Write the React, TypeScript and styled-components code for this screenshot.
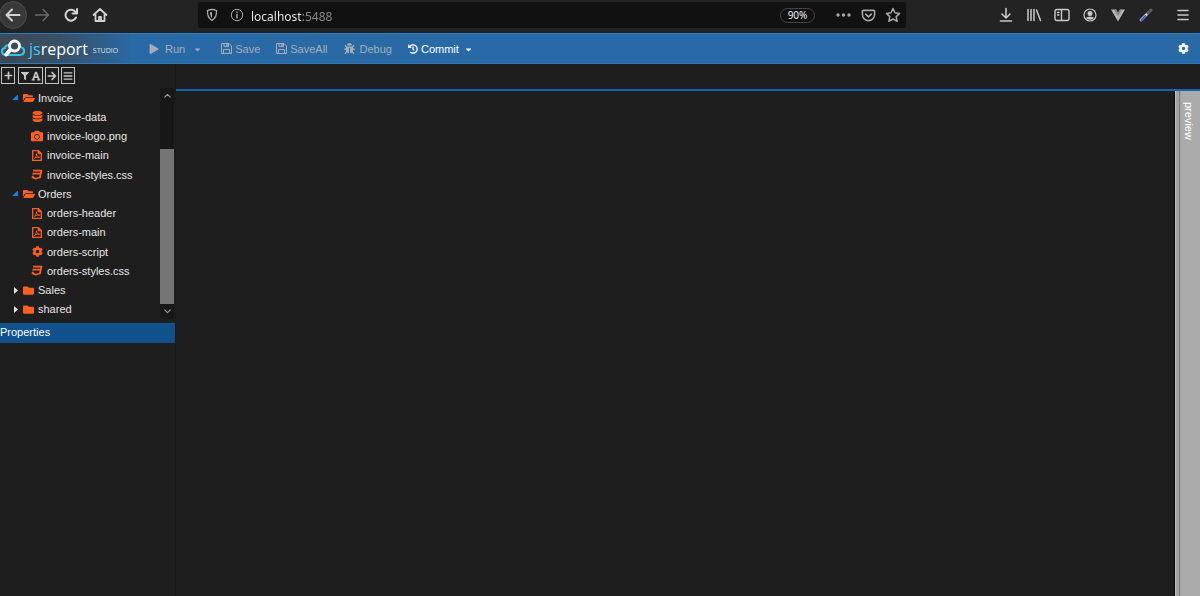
import React from "react";
import styled, { createGlobalStyle } from "styled-components";
import {
  FaArrowRight, FaBars, FaBug, FaCamera, FaCaretDown, FaCog, FaDatabase, FaFilter,
  FaFolder, FaFolderOpen, FaFont, FaHistory, FaPlay, FaPlus,
} from "react-icons/fa";

const sans = `"Liberation Sans", Arial, sans-serif`;
const humanist = `"Noto Sans", "Open Sans", sans-serif`;

const GlobalStyle = createGlobalStyle`
  * { box-sizing: border-box; }
  html, body, #root { height: 100%; }
  body { margin: 0; background: #1e1e1e; color: #e6e6e6; font: 11px/16px ${sans}; overflow: hidden; }
  button { border: 0; padding: 0; margin: 0; background: none; color: inherit; font: inherit; cursor: pointer; }
  svg { display: block; flex: none; }
  ul { list-style: none; margin: 0; padding: 0; }
`;

const Page = styled.div`
  display: flex;
  flex-direction: column;
  height: 100%;
`;

const BrowserBar = styled.header`
  display: flex;
  align-items: flex-start;
  height: 33px;
  background: #232323;
`;

const NavButtons = styled.nav`
  display: flex;
  align-items: center;
  width: 198px;
  height: 30px;
`;

const NavButton = styled.button<{ $back?: boolean; $dim?: boolean }>`
  display: grid;
  place-items: center;
  width: ${(p) => (p.$back ? 28 : 29)}px;
  height: 28px;
  margin-left: ${(p) => (p.$back ? "-1px" : "0")};
  border: ${(p) => (p.$back ? "1px solid #4c4c4c" : "0")};
  border-radius: 50%;
  background: ${(p) => (p.$back ? "#393939" : "transparent")};
  color: ${(p) => (p.$dim ? "#6a6a6a" : "#d2d2d2")};
`;

const AddressBar = styled.div`
  display: flex;
  align-items: center;
  flex: 0 1 708px;
  gap: 9px;
  height: 26px;
  margin-top: 2px;
  padding: 0 5px 0 6px;
  border-radius: 2px;
  background: #111;
  color: #a8a8a8;
`;

const Address = styled.input`
  flex: 1;
  min-width: 0;
  height: 22px;
  margin-left: -3px;
  padding: 2px 0 0;
  border: 0;
  outline: 0;
  background: linear-gradient(90deg, #f2f2f2 51px, #8c8c8c 51px);
  background-clip: text;
  -webkit-text-fill-color: transparent;
  font: 12px/20px ${humanist};
`;

const ZoomLevel = styled.button`
  width: 35px;
  height: 15px;
  margin-right: 11px;
  border: 1px solid #454545;
  border-radius: 8px;
  color: #eee;
  font: 10px/13px ${humanist};
`;

const Extensions = styled.div`
  display: flex;
  align-items: center;
  height: 30px;
  margin-left: auto;
  padding-right: 9px;
  gap: 12px;
  color: #c9c9c9;
`;

const IconButton = styled.button<{ $spaced?: boolean }>`
  display: grid;
  place-items: center;
  width: 16px;
  height: 20px;
  margin-left: ${(p) => (p.$spaced ? "9px" : "0")};
`;

const Toolbar = styled.div`
  display: flex;
  align-items: center;
  height: 31px;
  border-top: 1px solid #2f7dc4;
  border-bottom: 1px solid #2f78b9;
  background: linear-gradient(90deg, #3d4954 0, #385066 60px, #296aa6 135px);
`;

const Brand = styled.a`
  display: flex;
  align-items: center;
  width: 149px;
  color: #fff;
  text-decoration: none;
`;

const BrandName = styled.span`
  margin-left: 4px;
  font: 16px/24px "Open Sans", sans-serif;
`;

const BrandPrefix = styled.span`
  color: #3fc6f5;
`;

const BrandTag = styled.span`
  margin: 5px 0 0 5px;
  font: 7px/10px "Open Sans", sans-serif;
  color: #dfe6ec;
`;

const Tool = styled.button<{ $active?: boolean; $gap?: number; $after?: number }>`
  display: flex;
  align-items: center;
  gap: ${(p) => p.$gap ?? 3}px;
  height: 28px;
  margin-right: ${(p) => p.$after ?? 16}px;
  color: ${(p) => (p.$active ? "#fff" : "#a6adb4")};
`;

const Caret = styled(FaCaretDown)`
  width: 9px;
  height: 9px;
  margin: 2px 0 0 2px;
`;

const Settings = styled.button`
  margin: 0 11px 0 auto;
  color: #fff;
`;

const Workspace = styled.div`
  display: flex;
  flex: 1;
  min-height: 0;
`;

const Sidebar = styled.aside`
  width: 176px;
  flex: none;
  border-right: 1px solid #1a1a1a;
`;

const TreeActions = styled.div`
  display: flex;
  align-items: center;
  gap: 2px;
  height: 24px;
  padding: 0 0 1px 1px;
  color: #c8c8c8;
`;

const TreeAction = styled.button<{ $wide?: boolean }>`
  display: flex;
  align-items: center;
  justify-content: center;
  gap: 2px;
  width: ${(p) => (p.$wide ? 25 : 14)}px;
  height: 17px;
  margin-left: ${(p) => (p.$wide ? 1 : 0)}px;
  border: 1px solid #c4c4c4;
`;

const TreePane = styled.div`
  display: flex;
  height: 231px;
`;

const Tree = styled.ul`
  display: grid;
  grid-auto-rows: 1fr;
  flex: 1;
`;

const TreeRow = styled.button<{ $nested?: boolean }>`
  display: flex;
  align-items: center;
  width: 100%;
  height: 100%;
  padding-left: ${(p) => (p.$nested ? 31 : 12)}px;
  text-align: left;
`;

const TreeIcon = styled.span<{ $nested?: boolean }>`
  display: grid;
  place-items: center;
  width: ${(p) => (p.$nested ? 12 : 11)}px;
  margin-right: 4px;
  color: #ff5f1f;
`;

const Twisty = styled.span`
  width: 7px;
  margin-right: 4px;
`;

const Scrollbar = styled.div`
  display: flex;
  flex-direction: column;
  align-items: center;
  width: 14px;
  margin-right: 1px;
  background: #171717;
`;

const ScrollArrow = styled.button`
  display: grid;
  place-items: center;
  width: 14px;
  height: 15px;
  color: #999;
`;

const Track = styled.div`
  display: flex;
  flex: 1;
  width: 14px;
  align-items: flex-end;
`;

const Thumb = styled.div`
  width: 100%;
  height: 77%;
  background: #757575;
`;

const PropertiesTitle = styled.h2`
  height: 20px;
  margin: 4px 0 0;
  background: #10508b;
  color: #fff;
  font: 11px/19px ${sans};
`;

const Main = styled.main`
  display: flex;
  flex-direction: column;
  flex: 1;
  min-width: 0;
`;

const TabStrip = styled.div`
  height: 27px;
  border-bottom: 2px solid #1462b4;
`;

const Content = styled.div`
  display: flex;
  flex: 1;
`;

const Editor = styled.section`
  flex: 1;
  border-right: 1px solid #050505;
`;

const Splitter = styled.div`
  width: 6px;
  border-left: 1px solid #c2c2c2;
  background: linear-gradient(90deg, #a4a4a4 3px, #808080 3px, #808080 4px, #a0a0a0 4px);
`;

const PreviewTab = styled.button`
  display: flex;
  align-items: flex-start;
  width: 19px;
  padding: 11px 4px 0 0;
  background: #ababab;
  color: #fff;
  writing-mode: vertical-rl;
  line-height: 15px;
`;

const Line = ({ d, size = 16, width = 2 }: { d: string; size?: number; width?: number }) => (
  <svg width={size} height={size} viewBox="0 0 16 16" fill="none" stroke="currentColor" strokeWidth={width} strokeLinecap="round" strokeLinejoin="round">
    <path d={d} />
  </svg>
);

const LogoMark = () => (
  <svg width="25" height="20" viewBox="0 0 25 20" fill="none">
    <path d="M8 6.500C6.500 6.300 5 7.400 4.800 9 3 9.300 2 10.700 2 12.300 2 14.500 3.700 16 6 16h13.500c2.600 0 4.500-1.600 4.500-4 0-2.300-1.700-3.800-4-4" stroke="#35c0ef" strokeWidth="2.200" />
    <path d="M10.500 10.500l-4.300 5" stroke="#fff" strokeWidth="4" strokeLinecap="round" />
    <circle cx="14.500" cy="7" r="5" fill="#3b4c5c" stroke="#fff" strokeWidth="2.800" />
  </svg>
);

const Floppy = () => (
  <svg width="11" height="11" viewBox="0 0 11 11" fill="none" stroke="currentColor">
    <path d="M.5.500h7.500L10.500 3v7.500H.5z" />
    <path d="M3 .500v3h4.500v-3M2.500 10.500V6.500h6v4" />
    <path d="M6 1v2" strokeWidth="1.500" />
  </svg>
);

type Kind = "data" | "image" | "pdf" | "script" | "css" | "open" | "closed";

const icons: Record<Kind, React.ReactNode> = {
  data: <FaDatabase size={11} />,
  image: <FaCamera size={12} />,
  pdf: (
    <svg width="10" height="11" viewBox="0 0 10 11" fill="none" stroke="currentColor">
      <path d="M.7.700h5.800L9.300 3.500v6.800H.7zM6.300.700v3h3" strokeWidth="1.300" />
      <path d="M2.200 8.700C3.500 8 4.700 5.500 4.300 3.700c.2 2 1.300 3.200 3.500 3.500-2-.2-3.500 0-4.800.7" strokeWidth=".9" />
    </svg>
  ),
  script: <FaCog size={11} />,
  css: (
    <svg width="12" height="11" viewBox="0 0 1792 1792" fill="currentColor">
      <path d="M275 128h1505l-266 1333-804 267-698-267 71-356h297l-29 147 422 161 486-161 68-339H119l58-297h1209l38-191H216z" />
    </svg>
  ),
  open: <FaFolderOpen size={12} />,
  closed: <FaFolder size={11} />,
};

const entries: { name: string; kind: Kind }[] = [
  { name: "Invoice", kind: "open" },
  { name: "invoice-data", kind: "data" },
  { name: "invoice-logo.png", kind: "image" },
  { name: "invoice-main", kind: "pdf" },
  { name: "invoice-styles.css", kind: "css" },
  { name: "Orders", kind: "open" },
  { name: "orders-header", kind: "pdf" },
  { name: "orders-main", kind: "pdf" },
  { name: "orders-script", kind: "script" },
  { name: "orders-styles.css", kind: "css" },
  { name: "Sales", kind: "closed" },
  { name: "shared", kind: "closed" },
];

function Entry({ name, kind }: { name: string; kind: Kind }) {
  const folder = kind === "open" || kind === "closed";
  return (
    <li>
      <TreeRow $nested={!folder}>
        {folder && (
          <Twisty>
            <svg width="7" height="7" viewBox="0 0 7 7">
              {kind === "open" ? <path d="M6 .500V6H0z" fill="#1683e8" /> : <path d="M2 0l4 3.500L2 7z" fill="#e8e0cc" />}
            </svg>
          </Twisty>
        )}
        <TreeIcon $nested={!folder}>{icons[kind]}</TreeIcon>
        {name}
      </TreeRow>
    </li>
  );
}

export default function App() {
  return (
    <Page>
      <GlobalStyle />
      <BrowserBar>
        <NavButtons>
          <NavButton $back aria-label="Back"><Line d="M14.500 8H1.500M7 2.500L1.500 8 7 13.500" /></NavButton>
          <NavButton $dim aria-label="Forward"><Line d="M1.500 8h13M9 2.500L14.500 8 9 13.500" width={1.5} /></NavButton>
          <NavButton aria-label="Reload"><Line d="M13 10.500A5.500 5.500 0 1 1 12.500 5M14 2v4.500H9.500" /></NavButton>
          <NavButton aria-label="Home"><Line d="M1.500 8L8 2l6.500 6M3.500 7.500V14h9V7.500M7 14v-4h2v4" width={1.8} /></NavButton>
        </NavButtons>
        <AddressBar>
          <IconButton aria-label="Tracking protection">
            <svg width="14" height="14" viewBox="0 0 14 14" fill="none" stroke="currentColor">
              <path d="M7 1.500c-2 0-3.500.5-4.500 1C2.300 7 3.500 10.500 7 12.500c3.500-2 4.700-5.500 4.500-10-1-.5-2.500-1-4.500-1z" strokeWidth="1.300" />
              <path d="M7 4v6C5.500 8.700 5 7 5 4.300z" fill="currentColor" stroke="none" />
            </svg>
          </IconButton>
          <IconButton aria-label="Site information">
            <svg width="14" height="14" viewBox="0 0 14 14" fill="none" stroke="currentColor">
              <circle cx="7" cy="7" r="5.700" />
              <path d="M7 6v4.500M7 3.500v1.500" strokeWidth="1.500" />
            </svg>
          </IconButton>
          <Address aria-label="Address" defaultValue="localhost:5488" />
          <ZoomLevel>90%</ZoomLevel>
          <IconButton aria-label="Page actions">
            <svg width="15" height="4" viewBox="0 0 15 4" fill="currentColor"><circle cx="2" cy="2" r="1.700" /><circle cx="7.500" cy="2" r="1.700" /><circle cx="13" cy="2" r="1.700" /></svg>
          </IconButton>
          <IconButton aria-label="Pocket"><Line d="M2.500 2.500h11q1 0 1 1V7a6.500 6.500 0 0 1-13 0V3.500q0-1 1-1zM5 6.500l3 3 3-3" size={15} width={1.7} /></IconButton>
          <IconButton aria-label="Bookmark"><Line d="M8 1.500l2 4.300 4.600.6-3.400 3.200.9 4.700L8 12l-4.100 2.300.9-4.700L1.400 6.400 6 5.800z" width={1.5} /></IconButton>
        </AddressBar>
        <Extensions>
          <IconButton aria-label="Downloads"><Line d="M8 1.500v9M4 7l4 4 4-4M2.500 14h11" width={1.6} /></IconButton>
          <IconButton aria-label="Library"><Line d="M2 2.500v11M5 2.500v11M8 2.500v11M10.500 3l4 10.500" width={1.5} /></IconButton>
          <IconButton aria-label="Sidebars"><Line d="M3 2.500h10q2 0 2 2v7q0 2-2 2H3q-2 0-2-2v-7q0-2 2-2zM7.500 3v10M3.500 5.500H5M3.500 8H5" width={1.4} /></IconButton>
          <IconButton aria-label="Account">
            <svg width="14" height="14" viewBox="0 0 14 14" fill="none"><circle cx="7" cy="7" r="6" stroke="currentColor" strokeWidth="1.200" /><circle cx="7" cy="5.500" r="2.500" fill="currentColor" /><path d="M3 10c1-1.800 7-1.800 8 0-2 2.300-6 2.300-8 0z" fill="currentColor" /></svg>
          </IconButton>
          <IconButton aria-label="Vue devtools">
            <svg width="14" height="13" viewBox="0 0 14 13"><path d="M0 .500h5l2 3.500L9 .500h5L7 12.500z" fill="#b4b4b4" /><path d="M3 .500h2l2 3.500L9 .500h2L7 7.500z" fill="#888" /></svg>
          </IconButton>
          <IconButton aria-label="Color picker">
            <svg width="14" height="14" viewBox="0 0 14 14" fill="none" strokeLinecap="round"><path d="M2 12l6-6" stroke="#d5d5e2" strokeWidth="2.600" /><path d="M2.300 12l4-4" stroke="#4262d8" strokeWidth="1.800" /><path d="M9 5l3-3" stroke="#5c5c5c" strokeWidth="3" /></svg>
          </IconButton>
          <IconButton $spaced aria-label="Menu"><Line d="M3 3.500h10M3 8h10M3 12.500h10" width={1.6} /></IconButton>
        </Extensions>
      </BrowserBar>

      <Toolbar>
        <Brand href="#">
          <LogoMark />
          <BrandName><BrandPrefix>js</BrandPrefix>report</BrandName>
          <BrandTag>STUDIO</BrandTag>
        </Brand>
        <Tool $gap={6} $after={19}><FaPlay size={10} />Run <Caret /></Tool>
        <Tool><Floppy />Save</Tool>
        <Tool><Floppy />SaveAll</Tool>
        <Tool $gap={5}><FaBug size={11} />Debug</Tool>
        <Tool $active><FaHistory size={10} />Commit <Caret /></Tool>
        <Settings aria-label="Settings"><FaCog size={11} /></Settings>
      </Toolbar>

      <Workspace>
        <Sidebar>
          <TreeActions>
            <TreeAction aria-label="New entity"><FaPlus size={9} /></TreeAction>
            <TreeAction $wide aria-label="Filter by name"><FaFilter size={8} /><FaFont size={10} /></TreeAction>
            <TreeAction aria-label="Reveal"><FaArrowRight size={10} /></TreeAction>
            <TreeAction aria-label="Tree menu"><FaBars size={10} /></TreeAction>
          </TreeActions>
          <TreePane>
            <Tree>
              {entries.map((e) => <Entry key={e.name} {...e} />)}
            </Tree>
            <Scrollbar>
              <ScrollArrow aria-label="Scroll up"><Line d="M3 11l5-5 5 5" size={9} /></ScrollArrow>
              <Track><Thumb /></Track>
              <ScrollArrow aria-label="Scroll down"><Line d="M3 5l5 5 5-5" size={9} /></ScrollArrow>
            </Scrollbar>
          </TreePane>
          <PropertiesTitle>Properties</PropertiesTitle>
        </Sidebar>
        <Main>
          <TabStrip />
          <Content>
            <Editor />
            <Splitter />
            <PreviewTab>preview</PreviewTab>
          </Content>
        </Main>
      </Workspace>
    </Page>
  );
}
